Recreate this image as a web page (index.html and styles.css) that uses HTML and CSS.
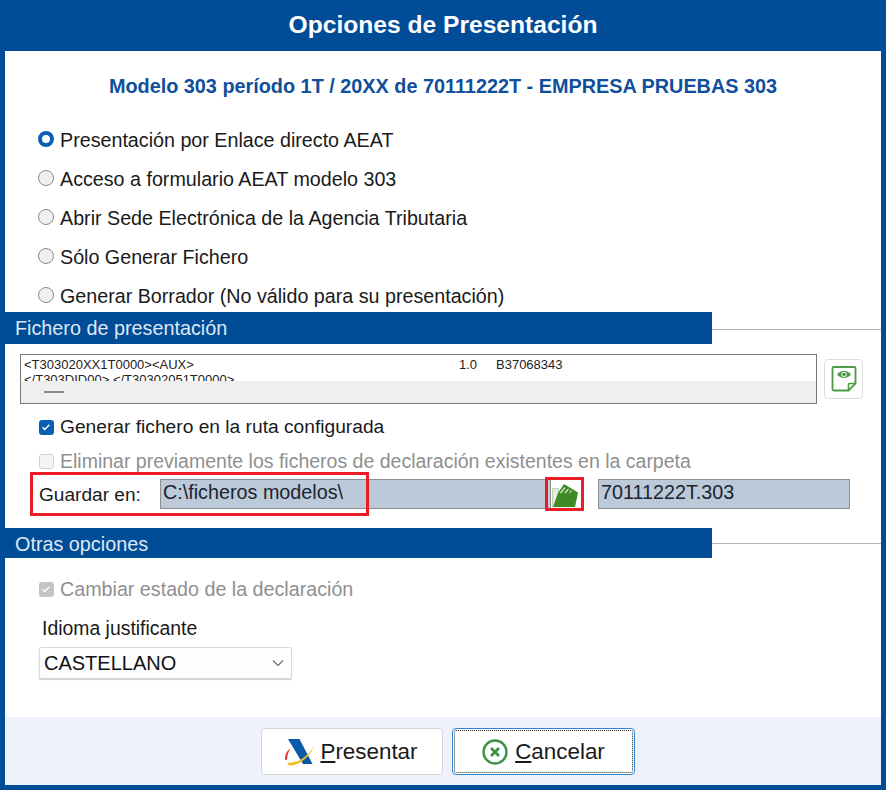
FILE: index.html
```html
<!DOCTYPE html>
<html lang="es">
<head>
<meta charset="utf-8">
<title>Opciones de Presentación</title>
<link rel="stylesheet" href="styles.css">
</head>
<body>
<div class="window">
  <header class="titlebar">Opciones de Presentación</header>
  <main class="content">
    <h2 class="subtitle">Modelo 303 período 1T / 20XX de 70111222T - EMPRESA PRUEBAS 303</h2>
    <div class="radios">
      <div class="option"><span class="radio radio-on"></span>Presentación por Enlace directo AEAT</div>
      <div class="option"><span class="radio"></span>Acceso a formulario AEAT modelo 303</div>
      <div class="option"><span class="radio"></span>Abrir Sede Electrónica de la Agencia Tributaria</div>
      <div class="option"><span class="radio"></span>Sólo Generar Fichero</div>
      <div class="option"><span class="radio"></span>Generar Borrador (No válido para su presentación)</div>
    </div>

    <div class="section-head"><div class="section-bar">Fichero de presentación</div><div class="section-line"></div></div>
    <div class="file-row">
      <div class="file-box">
        <div class="file-text">
          <div class="file-line"><span class="file-a">&lt;T303020XX1T0000&gt;&lt;AUX&gt;</span><span class="file-b">1.0</span><span class="file-c">B37068343</span></div>
          <div class="file-line">&lt;/T303DID00&gt; &lt;/T30302051T0000&gt;</div>
        </div>
        <div class="file-scroll"><span class="scroll-thumb"></span></div>
      </div>
      <button class="view-btn" type="button" aria-label="Ver">
        <svg width="28" height="28" viewBox="0 0 28 28">
          <path d="M2.500 3.500a1.500 1.500 0 0 1 1.500-1.500h20a1.500 1.500 0 0 1 1.500 1.500v15l-7 7h-14.500a1.500 1.500 0 0 1-1.500-1.500z" fill="#fff" stroke="#4f9a45" stroke-width="1.800"/>
          <path d="M25.500 18.500h-6a1 1 0 0 0-1 1v6" fill="none" stroke="#4f9a45" stroke-width="1.600"/>
          <path d="M7 9.500c3.500-5 10.500-5 14 0c-3.500 4.500-10.500 4.500-14 0z" fill="#4f9a45"/>
          <circle cx="14" cy="9.300" r="2.600" fill="#fff"/>
          <circle cx="14" cy="9.300" r="1.600" fill="#3d7f36"/>
        </svg>
      </button>
    </div>
    <div class="check-row check-first"><span class="check check-on"><svg width="16" height="16" viewBox="0 0 16 16"><path d="M4.500 8.300l2.300 2.300 4.500-4.800" fill="none" stroke="#fff" stroke-width="1.400"/></svg></span>Generar fichero en la ruta configurada</div>
    <div class="check-row check-second disabled"><span class="check check-off"></span>Eliminar previamente los ficheros de declaración existentes en la carpeta</div>
    <div class="save-row">
      <span class="save-label">Guardar en:</span>
      <div class="field field-path">C:\ficheros modelos\</div>
      <svg class="folder" width="28" height="28" viewBox="0 0 28 28">
        <path d="M2.500 7.500h6v18h-6z" fill="#e3ebe0" stroke="#b9d3b4"/>
        <path d="M8 12L14 3l14 8.500-3 14.500H3z" fill="#3f8a24"/>
        <path d="M10.500 12L15 6.500M15 12l3.500-4M19.500 12l2-2.500" stroke="#dbe8d5" stroke-width="1.200" fill="none"/>
      </svg>
      <div class="field field-name">70111222T.303</div>
      <span class="mark mark-path"></span>
      <span class="mark mark-folder"></span>
    </div>

    <div class="section-head section-two"><div class="section-bar">Otras opciones</div><div class="section-line"></div></div>
    <div class="check-row check-third disabled"><span class="check check-grey"><svg width="16" height="16" viewBox="0 0 16 16"><path d="M4.500 8.300l2.300 2.300 4.500-4.800" fill="none" stroke="#fff" stroke-width="1.400"/></svg></span>Cambiar estado de la declaración</div>
    <div class="lang-label">Idioma justificante</div>
    <div class="select">CASTELLANO<svg width="12" height="8" viewBox="0 0 12 8"><path d="M1 1.500l5 5 5-5" fill="none" stroke="#666" stroke-width="1.100"/></svg></div>
  </main>
  <footer class="actions">
    <button class="btn btn-main" type="button">
      <svg width="32" height="28" viewBox="0 0 32 28">
        <path d="M4 1h11.500l13 25h-9.500z" fill="#0a5aa8"/>
        <path d="M1 20c.3-4.500 2.400-7.500 5.500-9.500-1.900 2.800-3 6-3.300 9.500-.1 1.300-.3 2.200-1 2.200-.9 0-1.300-1.100-1.200-2.200z" fill="#d9352b"/>
        <path d="M3.500 24.500c9.500 1.500 21-6 26.500-17-3 10-14 20-23.500 20-1.700 0-3-1.300-3-3z" fill="#f2bd1d"/>
      </svg>
      <span class="btn-text"><u>P</u>resentar</span>
    </button>
    <button class="btn btn-focus" type="button">
      <svg width="26" height="26" viewBox="0 0 26 26">
        <circle cx="13" cy="13" r="11.500" fill="#fff" stroke="#3f9147" stroke-width="2.400"/>
        <path d="M9 9l8 8M17 9l-8 8" stroke="#3f9147" stroke-width="2.800"/>
      </svg>
      <span class="btn-text"><u>C</u>ancelar</span>
    </button>
  </footer>
</div>
</body>
</html>
```
FILE: styles.css
```css
* { box-sizing: border-box; }
html, body { margin: 0; padding: 0; }
body { width: 886px; height: 790px; overflow: hidden; font-family: "Liberation Sans", Arial, sans-serif; color: #1a1a1a; }

.window { width: 886px; height: 790px; background: #004c97; display: flex; flex-direction: column; padding: 0 5px 5px; }
.titlebar { height: 51px; flex: none; color: #fff; font-size: 24.600px; font-weight: 700; text-align: center; line-height: 50px; }
.content { flex: 1; background: #fff; min-height: 0; }

.subtitle { margin: 0; height: 69px; padding-top: 23px; font-size: 19.840px; line-height: 24px; font-weight: 700; color: #0f4f9c; text-align: center; white-space: nowrap; }
.radios { display: flex; flex-direction: column; padding-left: 33px; }
.option { height: 39px; display: flex; align-items: center; gap: 6px; font-size: 19.700px; padding-top: 2px; }
.radio { width: 16px; height: 16px; border-radius: 50%; background: #f0f0f0; border: 1px solid #8a8a8a; flex: none; margin-top: -3px; }
.radio-on { background: #fff; border: 4.500px solid #0a5fb4; }

.section-head { display: flex; align-items: center; margin-top: -3px; }
.section-bar { width: 707px; height: 32px; background: #004c97; color: #dfe8f3; font-size: 19.800px; line-height: 33px; padding-left: 10px; flex: none; }
.section-line { flex: 1; height: 1px; background: #b5b5b5; margin-top: 3px; }
.section-two { margin-top: 19px; }
.section-two .section-bar { height: 30px; line-height: 32px; }
.section-two .section-line { margin-top: 1px; }

.file-row { display: flex; align-items: center; padding: 10px 0 0 15px; gap: 7px; }
.file-box { width: 797px; height: 50px; border: 1px solid #777; background: #fff; display: flex; flex-direction: column; overflow: hidden; }
.file-text { height: 26px; overflow: hidden; padding: 3px 0 0 3px; font-size: 13px; line-height: 14px; color: #222; white-space: nowrap; flex: none; }
.file-line { height: 15px; }
.file-a { display: inline-block; width: 435px; }
.file-b { display: inline-block; width: 37px; }
.file-scroll { flex: 1; background: #efefef; position: relative; display: flex; align-items: center; padding-left: 23px; }
.scroll-thumb { width: 20px; height: 2px; background: #8c8c8c; }
.view-btn { width: 39px; height: 40px; background: #fff; border: 1px solid #ddd; border-radius: 4px; padding: 0; display: flex; align-items: center; justify-content: center; }

.check-row { display: flex; align-items: center; gap: 6px; padding-left: 34px; font-size: 19.700px; height: 24px; }
.check-first { margin-top: 11px; font-size: 19.200px; }
.check-second { margin-top: 10px; font-size: 19.500px; }
.disabled { color: #8f8f8f; }
.check { width: 15px; height: 15px; border-radius: 3px; flex: none; display: block; }
.check svg { display: block; margin: -1px 0 0 -1px; }
.check-on { background: #0a5fb4; }
.check-off { background: #f5f5f5; border: 1px solid #cfcfcf; }
.check-grey { background: #c4c4c4; }

.save-row { position: relative; display: flex; align-items: center; height: 30px; margin-top: 6px; padding-left: 34px; font-size: 19.100px; }
.save-label { width: 121px; flex: none; padding-top: 2px; }
.field { height: 30px; background: #bcc9d8; border: 1px solid #8f8f8f; line-height: 25px; font-size: 19.750px; padding-left: 2px; color: #1c2430; flex: none; }
.field-path { width: 391px; }
.folder { flex: none; margin: 2px 0 0 -1px; position: relative; }
.field-name { width: 252px; margin-left: 20px; padding-left: 2px; }
.mark { position: absolute; border: 3px solid #ea1c24; pointer-events: none; }
.mark-path { left: 25px; top: -7px; width: 339px; height: 44px; }
.mark-folder { left: 540px; top: -2px; width: 39px; height: 34px; }

.check-third { margin-top: 19px; }
.lang-label { font-size: 19.400px; line-height: 24px; margin: 15px 0 0 37px; }
.select { width: 253px; height: 32px; margin: 7px 0 0 34px; border: 1px solid #d9d9d9; border-radius: 2px; background: #fdfdfd; font-size: 20px; line-height: 31px; padding: 0 4px; display: flex; justify-content: space-between; align-items: center; color: #111; box-shadow: 0 1px 1px #ccc; }
.select svg { margin-right: 3px; }

.actions { height: 68px; flex: none; background: #eef2fb; display: flex; justify-content: flex-start; align-items: flex-start; gap: 9px; padding: 11px 0 0 256px; }
.btn { height: 47px; width: 182px; background: #fff; border: 1px solid #d4d4d4; border-radius: 4px; display: flex; align-items: center; justify-content: center; gap: 4px; font-family: inherit; font-size: 22.400px; color: #1a1a1a; padding: 0; }
.btn-main svg { margin-left: -2px; }
.btn-focus { width: 183px; gap: 7px; border: 1px solid #2f86d8; outline: 1px dotted #333; outline-offset: -3px; }
.btn-text { line-height: 26px; }
```
